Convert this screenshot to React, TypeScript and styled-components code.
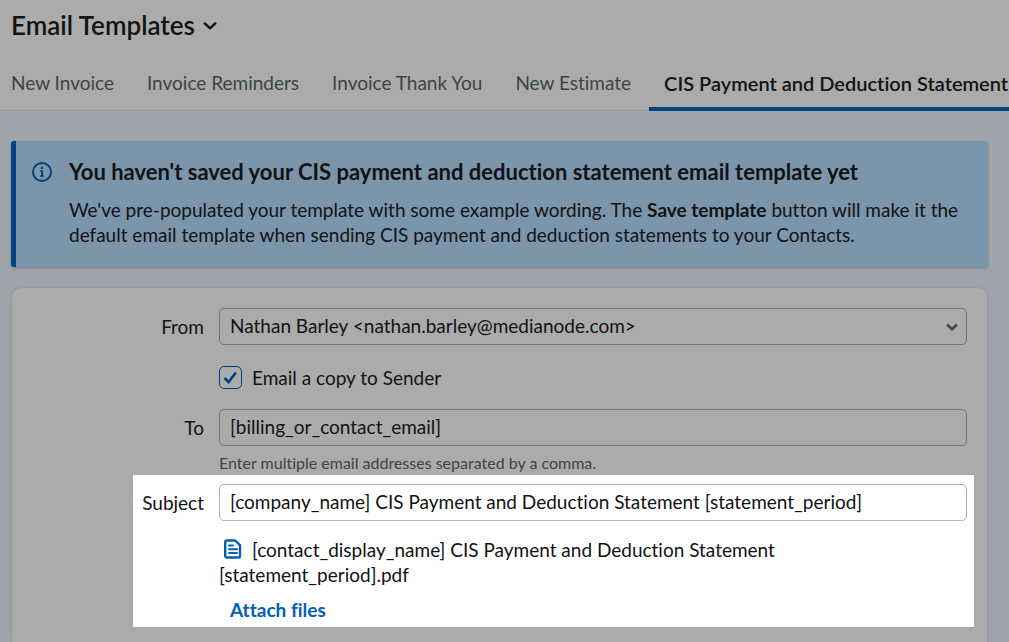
import React from 'react';
import styled, { createGlobalStyle } from 'styled-components';

const GlobalStyle = createGlobalStyle`
  *, *::before, *::after { box-sizing: border-box; }
  body {
    margin: 0;
    background: #a1a5ab;
    color: #111314;
    font: 400 19px/25px Lato, "Liberation Sans", sans-serif;
    font-variant-ligatures: none;
  }
  h1, h2, p { margin: 0; }
  input, select, button { font: inherit; font-variant-ligatures: none; color: inherit; }
`;

const Page = styled.div`
  display: flex;
  flex-direction: column;
  min-height: 100vh;
`;

const Header = styled.header`
  background: #ababab;
  overflow: hidden;
`;

const TitleRow = styled.div`
  display: flex;
  align-items: center;
  height: 58px;
  padding: 0 11px 8px;
`;

const Title = styled.h1`
  font-size: 26px;
  font-weight: 600;
  line-height: 32px;
`;

const TitleButton = styled.button`
  display: flex;
  align-items: center;
  gap: 8px;
  padding: 0;
  border: 0;
  background: none;
`;

const Tabs = styled.nav`
  display: flex;
  gap: 3px;
  height: 53px;
  white-space: nowrap;
  box-shadow: inset 0 -1px #96999d;
`;

const Tab = styled.a<{ $active?: boolean }>`
  flex: none;
  padding: 0 15px;
  line-height: 50px;
  text-decoration: none;
  color: ${(p) => (p.$active ? '#111314' : '#3a454b')};
  font-size: ${(p) => (p.$active ? 20 : 19)}px;
  font-weight: ${(p) => (p.$active ? 600 : 400)};
  box-shadow: ${(p) => (p.$active ? 'inset 0 -4px #00417f' : 'none')};

  &:first-child { padding-left: 11px; }
`;

const Main = styled.main`
  display: flex;
  flex: 1;
  flex-direction: column;
  gap: 20px;
  padding: 30px 21px 0 11px;
`;

const Banner = styled.section`
  display: flex;
  align-items: flex-start;
  gap: 17px;
  padding: 17px 20px 20px 16px;
  border-left: 5px solid #00417f;
  border-radius: 3px;
  background: #7b95ab;
  box-shadow: 0 1px 3px rgba(0, 0, 0, 0.25);
`;

const BannerIcon = styled.svg`
  flex: none;
  margin-top: 4px;
`;

const BannerTitle = styled.h2`
  margin-bottom: 11px;
  font-size: 22px;
  font-weight: 700;
  line-height: 28px;
`;

const Panel = styled.form`
  flex: 1;
  padding-top: 20px;
  border: 1px solid #96999f;
  border-bottom: 0;
  border-radius: 10px 10px 0 0;
  background: #ababab;
  box-shadow: 0 0 16px rgba(60, 75, 100, 0.08);
`;

const Row = styled.div`
  display: grid;
  grid-template-columns: 192px 1fr;
  column-gap: 15px;
  padding-right: 20px;
  margin-bottom: 20px;
`;

const Highlight = styled.section`
  margin: 0 13px 0 121px;
  padding: 9px 0 5px;
  background: #fff;

  ${Row} {
    grid-template-columns: 71px 1fr;
    padding-right: 7px;
    margin-bottom: 16px;
  }
  ${Row}:last-child { margin-bottom: 0; }
`;

const Label = styled.label`
  line-height: 37px;
  text-align: right;
`;

const Field = styled.div`
  grid-column: 2;
  min-width: 0;
`;

const TextInput = styled.input<{ $bright?: boolean }>`
  display: block;
  width: 100%;
  height: 37px;
  padding: 0 10px 2px;
  border: 1px solid ${(p) => (p.$bright ? '#a6b1ba' : '#717980')};
  border-radius: 5px;
  background: transparent;
  outline: none;
`;

const SelectWrap = styled.div`
  display: grid;
  align-items: center;

  > * { grid-area: 1 / 1; }
  > svg { justify-self: end; margin-right: 9px; pointer-events: none; }
`;

const Select = styled.select`
  width: 100%;
  height: 37px;
  padding: 0 30px 2px 10px;
  border: 1px solid #717980;
  border-radius: 5px;
  background: transparent;
  appearance: none;
  outline: none;
`;

const CheckLabel = styled.label`
  display: flex;
  align-items: center;
  gap: 10px;
  height: 24px;
`;

const CheckWrap = styled.span`
  display: grid;
  place-items: center;

  > * { grid-area: 1 / 1; }
  > svg { pointer-events: none; }
`;

const Checkbox = styled.input`
  width: 23px;
  height: 23px;
  margin: 0;
  border: 1px solid #00417f;
  border-radius: 5px;
  appearance: none;
`;

const Hint = styled.p`
  padding-top: 7px;
  margin-bottom: -20px;
  height: 29px;
  font-size: 16px;
  line-height: 20px;
  color: #3a454b;
`;

const FileName = styled.p`
  max-width: 600px;

  svg { margin: 0 10px 0 5px; vertical-align: -2px; }
`;

const AttachButton = styled.button`
  display: block;
  margin: 10px 0 0;
  padding: 0 11px;
  border: 0;
  background: none;
  color: #005eb8;
  font-weight: 700;
`;

export default function App() {
  return (
    <>
      <GlobalStyle />
      <Page>
        <Header>
          <TitleRow>
            <Title>
              <TitleButton type="button">
                Email Templates
                <svg width="14" height="10" viewBox="0 0 14 10" fill="none" stroke="#111314" strokeWidth="2.4" strokeLinecap="round" strokeLinejoin="round" aria-hidden="true">
                  <path d="M1.8 3.4 7 8.400l5.200-5" />
                </svg>
              </TitleButton>
            </Title>
          </TitleRow>
          <Tabs>
            <Tab href="#invoice">New Invoice</Tab>
            <Tab href="#reminders">Invoice Reminders</Tab>
            <Tab href="#thanks">Invoice Thank You</Tab>
            <Tab href="#estimate">New Estimate</Tab>
            <Tab href="#cis" $active aria-current="page">CIS Payment and Deduction Statement</Tab>
          </Tabs>
        </Header>
        <Main>
          <Banner>
            <BannerIcon width="20" height="20" viewBox="0 0 20 20" aria-hidden="true">
              <circle cx="10" cy="10" r="9" fill="none" stroke="#00417f" strokeWidth="2" />
              <circle cx="10" cy="6" r="1.3" fill="#00417f" />
              <path d="M8.200 8.300h2.900v5.200h1v1.300H8v-1.300h1V9.600h-.8z" fill="#00417f" />
            </BannerIcon>
            <div>
              <BannerTitle>You haven't saved your CIS payment and deduction statement email template yet</BannerTitle>
              <p>
                We've pre-populated your template with some example wording. The <strong>Save template</strong> button
                will make it the default email template when sending CIS payment and deduction statements to your
                Contacts.
              </p>
            </div>
          </Banner>
          <Panel>
            <Row>
              <Label htmlFor="from">From</Label>
              <SelectWrap>
                <Select id="from">
                  <option>Nathan Barley &lt;nathan.barley@medianode.com&gt;</option>
                </Select>
                <svg width="12" height="8" viewBox="0 0 12 8" fill="none" stroke="#3f4d54" strokeWidth="2.8" aria-hidden="true">
                  <path d="M1 1.500 6 6.100l5-4.600" />
                </svg>
              </SelectWrap>
            </Row>
            <Row>
              <Field>
                <CheckLabel>
                  <CheckWrap>
                    <Checkbox type="checkbox" defaultChecked />
                    <svg width="15" height="13" viewBox="0 0 15 13" fill="none" stroke="#00417f" strokeWidth="2.600" aria-hidden="true">
                      <path d="M1.500 7 5.600 11 13 1.500" />
                    </svg>
                  </CheckWrap>
                  Email a copy to Sender
                </CheckLabel>
              </Field>
            </Row>
            <Row>
              <Label htmlFor="to">To</Label>
              <Field>
                <TextInput id="to" defaultValue="[billing_or_contact_email]" />
                <Hint>Enter multiple email addresses separated by a comma.</Hint>
              </Field>
            </Row>
            <Highlight>
              <Row>
                <Label htmlFor="subject">Subject</Label>
                <TextInput
                  id="subject"
                  $bright
                  defaultValue="[company_name] CIS Payment and Deduction Statement [statement_period]"
                />
              </Row>
              <Row>
                <Field>
                  <FileName>
                    <svg width="18" height="20" viewBox="0 0 18 20" fill="none" stroke="#005eb8" strokeWidth="2.400" strokeLinejoin="round" aria-hidden="true">
                      <path d="M2.500 1.500H11L16 6.200V17a1.500 1.500 0 0 1-1.500 1.500h-12A1.500 1.500 0 0 1 1.200 17V3a1.500 1.500 0 0 1 1.300-1.500Z" />
                      <path d="M5 6.500h4M5 10.300h8M5 14.100h8" strokeWidth="2" strokeLinecap="round" />
                    </svg>
                    [contact_display_name] CIS Payment and Deduction Statement [statement_period].pdf
                  </FileName>
                  <AttachButton type="button">Attach files</AttachButton>
                </Field>
              </Row>
            </Highlight>
          </Panel>
        </Main>
      </Page>
    </>
  );
}
